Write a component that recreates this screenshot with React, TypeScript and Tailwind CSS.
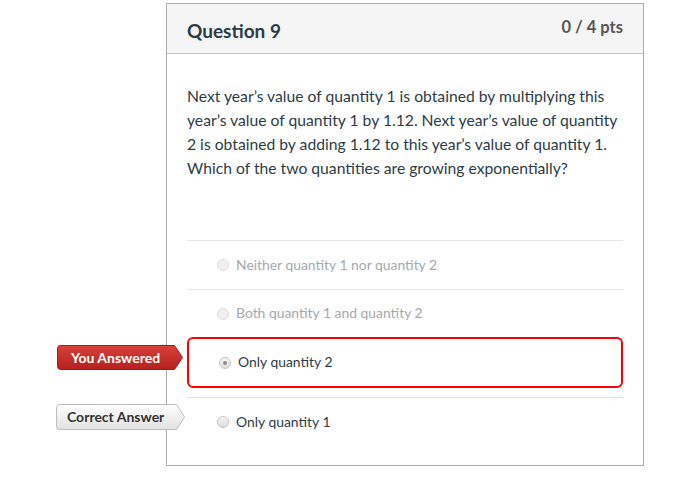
const ink = 'text-[#2d3b45]';

function Radio({ checked = false, faded = false }: { checked?: boolean; faded?: boolean }) {
  return (
    <span
      className={`relative inline-block w-[12px] h-[12px] rounded-full border shrink-0 ${
        faded ? 'border-[#dcdcdc] bg-[#f0f0f0]' : 'border-[#c4c4c4] bg-gradient-to-b from-[#f6f6f6] to-[#dedede]'
      }`}
    >
      {checked && <span className="absolute left-[3px] top-[3px] w-[4px] h-[4px] rounded-full bg-[#8c8c8c]" />}
    </span>
  );
}

function Tag({ kind, text }: { kind: 'red' | 'gray'; text: string }) {
  const red = kind === 'red';
  const w = red ? 126 : 129;
  const h = red ? 25 : 26;
  return (
    <div className="relative flex items-center" style={{ width: w, height: h }}>
      <svg className="absolute inset-0" width={w} height={h} viewBox={`0 0 ${w} ${h}`}>
        <defs>
          <linearGradient id={`g-${kind}`} x1="0" y1="0" x2="0" y2="1">
            <stop offset="0" stopColor={red ? '#d8423b' : '#ffffff'} />
            <stop offset="1" stopColor={red ? '#b51f1f' : '#e2e2e2'} />
          </linearGradient>
        </defs>
        <path
          d={`M3.5 0.5 H${w - 8.5} L${w - 0.5} ${h / 2} L${w - 8.5} ${h - 0.5} H3.5 Q0.5 ${h - 0.5} 0.5 ${h - 3.5} V3.5 Q0.5 0.5 3.5 0.5 Z`}
          fill={`url(#g-${kind})`}
          stroke={red ? '#a51c1c' : '#bdbdbd'}
        />
      </svg>
      <span
        className={`relative text-[14px] font-bold leading-none ${red ? 'pl-[14px] text-white' : 'pl-[11px] text-[#333]'}`}
      >
        {text}
      </span>
    </div>
  );
}

export default function App() {
  return (
    <div className="w-[697px] h-[477px] bg-white font-['Lato','Liberation_Sans',sans-serif] overflow-hidden">
      <div className="ml-[166px] mt-[3px] w-[478px] border border-[#acacac]">
        <div className="h-[50px] bg-[#f5f5f5] border-b border-[#c2c2c2] px-5 flex justify-between items-start">
          <h2 className={`pt-[15px] text-[19px] leading-[24px] font-bold ${ink}`}>Question 9</h2>
          <span className="pt-[11px] text-[16.5px] leading-[24px] font-bold text-[#555]">0 / 4 pts</span>
        </div>

        <div className="px-5 pt-[30px] pb-[19px]">
          <p className={`text-[15.7px] leading-[24px] ${ink}`}>
            Next year’s value of quantity 1 is obtained by multiplying this year’s value of quantity 1 by 1.12. Next
            year’s value of quantity 2 is obtained by adding 1.12 to this year’s value of quantity 1. Which of the two
            quantities are growing exponentially?
          </p>

          <div className="mt-[60px]">
            <div className="border-t border-[#e6e6e6] h-[49px] pl-[30px] flex items-center gap-[7px]">
              <Radio faded />
              <span className="text-[13.9px] text-[#a5a9ac]">Neither quantity 1 nor quantity 2</span>
            </div>
            <div className="border-t border-[#e6e6e6] h-[48px] pl-[30px] flex items-center gap-[7px]">
              <Radio faded />
              <span className="text-[13.9px] text-[#a5a9ac]">Both quantity 1 and quantity 2</span>
            </div>

            <div className="relative mb-[9px]">
              <div className="absolute left-[-130px] top-[8px]">
                <Tag kind="red" text="You Answered" />
              </div>
              <div className="h-[51px] border-2 border-[#ff0000] rounded-[6px] pl-[30px] flex items-center gap-[7px]">
                <Radio checked />
                <span className={`text-[13.9px] ${ink}`}>Only quantity 2</span>
              </div>
            </div>

            <div className="relative border-t border-[#e0e0e0] h-[49px] pl-[30px] flex items-center gap-[7px]">
              <div className="absolute left-[-131px] top-[6px]">
                <Tag kind="gray" text="Correct Answer" />
              </div>
              <Radio />
              <span className={`text-[13.9px] ${ink}`}>Only quantity 1</span>
            </div>
          </div>
        </div>
      </div>
    </div>
  );
}
